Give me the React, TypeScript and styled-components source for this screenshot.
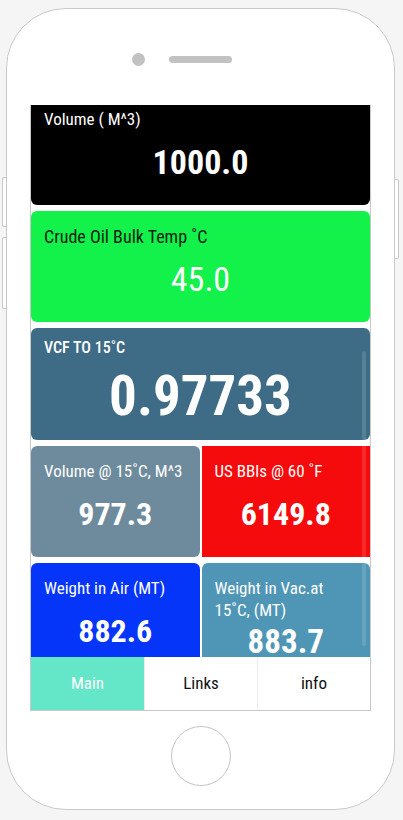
import React, { useLayoutEffect, useRef } from "react"
import styled, { createGlobalStyle } from "styled-components"

const GlobalStyle = createGlobalStyle`
  html, body {
    margin: 0;
    padding: 0;
    background: #f5f5f5;
  }
  body {
    font-family: "Roboto Condensed", "Liberation Sans Narrow", "DejaVu Sans Condensed", Roboto, sans-serif;
    font-stretch: condensed;
  }
  * {
    box-sizing: border-box;
  }
`

const Page = styled.div`
  height: 820px;
  padding: 8px 0 0 6px;
`

const Phone = styled.div`
  position: relative;
  width: 389px;
  height: 802px;
  border: 1.5px solid #c9c9c9;
  border-radius: 60px;
  background: #fff;
  display: flex;
  flex-direction: column;
  align-items: center;
`

const SideKey = styled.div<{ $side: "left" | "right"; $top: number; $height: number }>`
  position: absolute;
  top: ${(p) => p.$top}px;
  ${(p) => (p.$side === "left" ? "left: -5px;" : "right: -5px;")}
  width: 4px;
  height: ${(p) => p.$height}px;
  border: 1px solid #c9c9c9;
  ${(p) => (p.$side === "left" ? "border-right: none;" : "border-left: none;")}
  border-radius: ${(p) => (p.$side === "left" ? "2px 0 0 2px" : "0 2px 2px 0")};
  background: #fff;
`

const TopBar = styled.div`
  width: 100%;
  margin-top: 43.5px;
  display: grid;
  grid-template-columns: 1fr 63px 1fr;
  align-items: center;
  height: 13px;
`

const Camera = styled.div`
  justify-self: end;
  margin-right: 24px;
  width: 13px;
  height: 13px;
  border-radius: 50%;
  background: #c2c2c2;
`

const Speaker = styled.div`
  height: 7px;
  border-radius: 4px;
  background: #c2c2c2;
`

const Screen = styled.div`
  position: relative;
  margin-top: 39px;
  width: 341px;
  height: 606px;
  border: 1px solid #c8c8c8;
  border-top: none;
  display: flex;
  flex-direction: column;
  overflow: hidden;
`

const ScrollArea = styled.div`
  flex: 1;
  overflow-y: auto;
  scrollbar-width: none;
  &::-webkit-scrollbar {
    display: none;
  }
`

const CardList = styled.div`
  display: flex;
  flex-direction: column;
  gap: 6px;
`

const Row = styled.div`
  display: grid;
  grid-template-columns: 1fr 1fr;
  gap: 2px;
`

const Card = styled.div<{ $bg: string; $square?: boolean; $tall?: boolean; $dense?: boolean }>`
  height: ${(p) => (p.$tall ? 112 : 111)}px;
  padding: ${(p) => (p.$dense ? "10px 13px 5px" : "14px 13px 10px")};
  background: ${(p) => p.$bg};
  border-radius: ${(p) => (p.$square ? 0 : 6)}px;
  display: flex;
  flex-direction: column;
`

const Label = styled.div<{ $size?: number; $dark?: boolean; $weight?: number }>`
  font-size: ${(p) => p.$size ?? 17}px;
  line-height: 1.3;
  font-weight: ${(p) => p.$weight ?? 400};
  color: ${(p) => (p.$dark ? "#0d1f10" : "#fff")};
`

const Value = styled.div<{ $size: number; $weight?: number }>`
  flex: 1;
  display: flex;
  align-items: center;
  justify-content: center;
  font-size: ${(p) => p.$size}px;
  line-height: 1.2;
  font-weight: ${(p) => p.$weight ?? 700};
  color: #fff;
`

const ScrollThumb = styled.div`
  position: absolute;
  top: 246px;
  right: 4px;
  width: 4px;
  height: 295px;
  border-radius: 2px;
  background: rgba(255, 255, 255, 0.13);
  pointer-events: none;
`

const TabBar = styled.div`
  height: 53px;
  display: grid;
  grid-template-columns: repeat(3, 1fr);
  background: #fff;
`

const Tab = styled.div<{ $active?: boolean }>`
  display: flex;
  align-items: center;
  justify-content: center;
  font-size: 17px;
  font-weight: 400;
  color: ${(p) => (p.$active ? "#fff" : "#111")};
  background: ${(p) => (p.$active ? "#63e7c8" : "#fff")};
  & + & {
    border-left: 1px solid #ececec;
  }
`

const HomeButton = styled.div`
  margin-top: 15px;
  width: 60px;
  height: 60px;
  border-radius: 50%;
  border: 1px solid #c4c4c4;
`

export default function App() {
  const scrollRef = useRef<HTMLDivElement>(null)

  useLayoutEffect(() => {
    if (scrollRef.current) scrollRef.current.scrollTop = 11
  }, [])

  return (
    <>
      <GlobalStyle />
      <Page>
        <Phone>
          <SideKey $side="left" $top={168} $height={50} />
          <SideKey $side="left" $top={228} $height={72} />
          <SideKey $side="right" $top={170} $height={80} />
          <TopBar>
            <Camera />
            <Speaker />
          </TopBar>
          <Screen>
            <ScrollArea ref={scrollRef}>
              <CardList>
                <Card $bg="#000">
                  <Label>Volume ( M^3)</Label>
                  <Value $size={34}>1000.0</Value>
                </Card>
                <Card $bg="#13f24b">
                  <Label $size={18} $dark>
                    Crude Oil Bulk Temp ˚C
                  </Label>
                  <Value $size={34} $weight={400}>
                    45.0
                  </Value>
                </Card>
                <Card $bg="#3e6c87" $tall $dense>
                  <Label $size={16} $weight={500}>
                    VCF TO 15˚C
                  </Label>
                  <Value $size={55}>0.97733</Value>
                </Card>
                <Row>
                  <Card $bg="#6d8b9d">
                    <Label>Volume @ 15˚C, M^3</Label>
                    <Value $size={32}>977.3</Value>
                  </Card>
                  <Card $bg="#f50b0b" $square>
                    <Label>US BBls @ 60 ˚F</Label>
                    <Value $size={32}>6149.8</Value>
                  </Card>
                </Row>
                <Row>
                  <Card $bg="#0535f8">
                    <Label>Weight in Air (MT)</Label>
                    <Value $size={32}>882.6</Value>
                  </Card>
                  <Card $bg="#4f96b6">
                    <Label>Weight in Vac.at 15˚C, (MT)</Label>
                    <Value $size={33}>883.7</Value>
                  </Card>
                </Row>
              </CardList>
            </ScrollArea>
            <ScrollThumb />
            <TabBar>
              <Tab $active>Main</Tab>
              <Tab>Links</Tab>
              <Tab>info</Tab>
            </TabBar>
          </Screen>
          <HomeButton />
        </Phone>
      </Page>
    </>
  )
}
